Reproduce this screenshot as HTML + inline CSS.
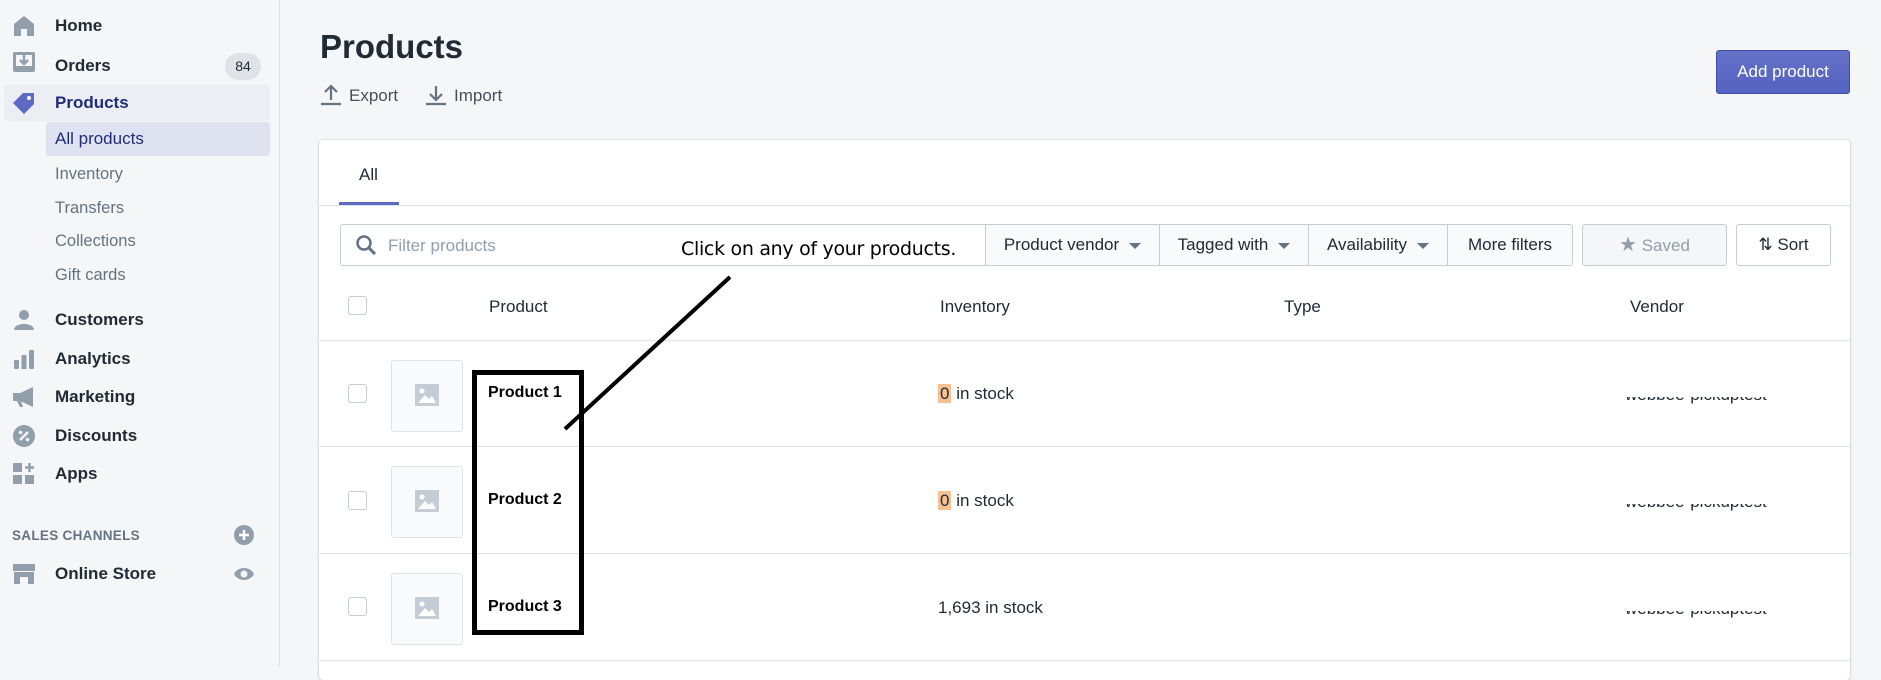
<!DOCTYPE html>
<html><head><meta charset="utf-8"><style>
*{box-sizing:border-box;margin:0;padding:0}
body{width:1881px;height:667px;overflow:hidden;background:#f4f6f8;font-family:"Liberation Sans",sans-serif;color:#212b36;position:relative;font-size:17px}
.abs{position:absolute}
.side{position:absolute;left:0;top:0;width:280px;height:667px;background:#f4f6f8;border-right:1px solid #dfe3e8}
.nav{position:absolute;left:55px;font-size:17px;color:#212b36;font-weight:bold;line-height:20px}
.sub{position:absolute;left:55px;font-size:16.5px;color:#637381;line-height:20px}
.ic{position:absolute;left:12px;width:24px;height:24px}
.card{position:absolute;left:319px;top:140px;width:1531px;height:540px;background:#fff;border-radius:4px;box-shadow:0 0 0 1px rgba(63,63,68,.07),0 1px 3px rgba(63,63,68,.15)}
.btn{position:absolute;top:224px;height:42px;border:1px solid #c4cdd5;background:#fff;font-size:17px;line-height:40px;color:#212b36;text-align:center}
.caret{display:inline-block;width:0;height:0;border-left:6px solid transparent;border-right:6px solid transparent;border-top:6px solid #637381;margin-left:10px;vertical-align:middle}
.hl{position:absolute;left:319px;width:1531px;height:1px;background:#dfe3e8}
.cb{position:absolute;left:348px;width:19px;height:19px;border:1px solid #c4cdd5;border-radius:3px;background:#fff}
.th{position:absolute;left:391px;width:72px;height:72px;border:1px solid #dfe3e8;border-radius:3px;background:#f9fafb}
.th svg{position:absolute;left:23px;top:23px}
.pn{position:absolute;left:488px;font-size:16px;font-weight:bold;color:#000}
.inv{position:absolute;left:938px;font-size:17px;color:#212b36}
.z{background:#f7c08f;padding:0 2px}
.ven{position:absolute;left:1625px;width:160px;height:7px;overflow:hidden;font-size:17px;color:#212b36}
.ven span{position:relative;top:-12px}
</style></head><body>
<div class="side">
  <svg class="ic" style="top:14px" viewBox="0 0 24 24"><path d="M2 10 L12 2 L22 10 V22 H15 V15 H9 V22 H2Z" fill="#919eab"/></svg>
  <div class="nav" style="top:16px">Home</div>
  <svg class="ic" style="top:50px" viewBox="0 0 24 24"><rect x="1" y="2" width="22" height="20" rx="2" fill="#919eab"/><rect x="4" y="5" width="16" height="11" fill="#f4f6f8"/><path d="M12 5v8M8 10l4 4 4-4" stroke="#919eab" stroke-width="2.5" fill="none"/></svg>
  <div class="nav" style="top:56px">Orders</div>
  <div class="abs" style="left:225px;top:53px;width:36px;height:27px;border-radius:14px;background:#dfe3e8;font-size:14px;line-height:27px;text-align:center;color:#212b36">84</div>
  <div class="abs" style="left:4px;top:85px;width:266px;height:36px;background:#ebeef2;border-radius:3px"></div>
  <svg class="ic" style="top:91px" viewBox="0 0 24 24"><path d="M11 2 H22 V13 L12 23 L1 12Z" fill="#5c6ac4"/><circle cx="17" cy="7" r="2" fill="#fff"/></svg>
  <div class="nav" style="top:93px;color:#202e78">Products</div>
  <div class="abs" style="left:46px;top:122px;width:224px;height:34px;background:#dfe3f1;border-radius:3px"></div>
  <div class="nav" style="top:129px;color:#202e78;font-weight:normal;font-size:17px">All products</div>
  <div class="sub" style="top:164px">Inventory</div>
  <div class="sub" style="top:198px">Transfers</div>
  <div class="sub" style="top:231px">Collections</div>
  <div class="sub" style="top:265px">Gift cards</div>
  <svg class="ic" style="top:308px" viewBox="0 0 24 24"><circle cx="12" cy="7" r="5" fill="#919eab"/><path d="M2 22 C2 14 22 14 22 22Z" fill="#919eab"/></svg>
  <div class="nav" style="top:310px">Customers</div>
  <svg class="ic" style="top:347px" viewBox="0 0 24 24"><rect x="2" y="13" width="5" height="9" rx="1" fill="#919eab"/><rect x="9.5" y="8" width="5" height="14" rx="1" fill="#919eab"/><rect x="17" y="3" width="5" height="19" rx="1" fill="#919eab"/></svg>
  <div class="nav" style="top:349px">Analytics</div>
  <svg class="ic" style="top:385px" viewBox="0 0 24 24"><path d="M1 8 H8 L21 2 V22 L8 16 H1Z M5 16 L8 22 H11 L9 16Z" fill="#919eab"/></svg>
  <div class="nav" style="top:387px">Marketing</div>
  <svg class="ic" style="top:424px" viewBox="0 0 24 24"><circle cx="12" cy="12" r="11" fill="#919eab"/><path d="M8 16 L16 8" stroke="#f4f6f8" stroke-width="2.5"/><circle cx="8.5" cy="8.5" r="1.8" fill="#f4f6f8"/><circle cx="15.5" cy="15.5" r="1.8" fill="#f4f6f8"/></svg>
  <div class="nav" style="top:426px">Discounts</div>
  <svg class="ic" style="top:462px" viewBox="0 0 24 24"><rect x="1" y="1" width="9" height="9" fill="#919eab"/><rect x="1" y="13" width="9" height="9" fill="#919eab"/><rect x="13" y="13" width="9" height="9" fill="#919eab"/><path d="M17.5 1v9M13 5.5h9" stroke="#919eab" stroke-width="2.5"/></svg>
  <div class="nav" style="top:464px">Apps</div>
  <div class="abs" style="left:12px;top:528px;font-size:13.5px;color:#637381;font-weight:bold;letter-spacing:.3px">SALES CHANNELS</div>
  <svg class="abs" style="left:234px;top:525px" width="20" height="20" viewBox="0 0 20 20"><circle cx="10" cy="10" r="10" fill="#919eab"/><path d="M10 5v10M5 10h10" stroke="#fff" stroke-width="2.5"/></svg>
  <svg class="ic" style="top:562px" viewBox="0 0 24 24"><path d="M1 2h22v7H1z M2 10h20v12h-6v-7H8v7H2z" fill="#919eab"/></svg>
  <div class="nav" style="top:564px">Online Store</div>
  <svg class="abs" style="left:233px;top:566px" width="22" height="16" viewBox="0 0 22 16"><path d="M1 8 C5 0 17 0 21 8 C17 16 5 16 1 8Z" fill="#919eab"/><circle cx="11" cy="8" r="3.5" fill="#f4f6f8"/></svg>
</div>
<div class="abs" style="left:320px;top:28px;font-size:33px;font-weight:bold;color:#212b36">Products</div>
<svg class="abs" style="left:320px;top:84px" width="22" height="22" viewBox="0 0 22 22"><path d="M11 16V3M5 8l6-6 6 6M1 20h20" stroke="#637381" stroke-width="2.2" fill="none"/></svg>
<div class="abs" style="left:349px;top:86px;font-size:17px;color:#454f5b">Export</div>
<svg class="abs" style="left:425px;top:84px" width="22" height="22" viewBox="0 0 22 22"><path d="M11 2v13M5 10l6 6 6-6M1 20h20" stroke="#637381" stroke-width="2.2" fill="none"/></svg>
<div class="abs" style="left:454px;top:86px;font-size:17px;color:#454f5b">Import</div>
<div class="abs" style="left:1716px;top:50px;width:134px;height:44px;background:linear-gradient(#6371c7,#5563c1);border:1px solid #3f4eae;border-radius:3px;color:#fff;font-size:17px;line-height:42px;text-align:center">Add product</div>

<div class="card"></div>
<div class="abs" style="left:359px;top:165px;font-size:17px;color:#212b36">All</div>
<div class="abs" style="left:339px;top:202px;width:60px;height:3px;background:#5c6ac4"></div>
<div class="hl" style="top:205px"></div>
<div class="abs" style="left:340px;top:224px;width:646px;height:42px;border:1px solid #c4cdd5;border-radius:3px 0 0 3px;background:#fff"></div>
<svg class="abs" style="left:355px;top:234px" width="22" height="22" viewBox="0 0 22 22"><circle cx="9" cy="9" r="6.5" stroke="#637381" stroke-width="2.5" fill="none"/><path d="M14 14l6 6" stroke="#637381" stroke-width="3"/></svg>
<div class="abs" style="left:388px;top:236px;font-size:17px;color:#919eab">Filter products</div>
<div class="btn" style="left:985px;width:175px;background:#f9fafb">Product vendor<span class="caret"></span></div>
<div class="btn" style="left:1159px;width:150px;background:#f9fafb">Tagged with<span class="caret"></span></div>
<div class="btn" style="left:1308px;width:140px;background:#f9fafb">Availability<span class="caret"></span></div>
<div class="btn" style="left:1447px;width:126px;border-radius:0 3px 3px 0;background:#f9fafb">More filters</div>
<div class="btn" style="left:1582px;width:145px;border-radius:3px;background:#f4f6f8;color:#919eab"><span style="color:#919eab;font-size:20px">★</span> Saved</div>
<div class="btn" style="left:1736px;width:95px;border-radius:3px">⇅ Sort</div>

<div class="cb" style="top:296px"></div>
<div class="abs" style="left:489px;top:297px;font-size:17px">Product</div>
<div class="abs" style="left:940px;top:297px;font-size:17px">Inventory</div>
<div class="abs" style="left:1284px;top:297px;font-size:17px">Type</div>
<div class="abs" style="left:1630px;top:297px;font-size:17px">Vendor</div>
<div class="hl" style="top:340px"></div>
<div class="hl" style="top:446px"></div>
<div class="hl" style="top:553px"></div>
<div class="hl" style="top:660px"></div>

<div class="cb" style="top:384px"></div>
<div class="th" style="top:360px"><svg width="24" height="22" viewBox="0 0 24 22"><rect width="24" height="22" fill="#c4cdd5"/><circle cx="7" cy="7" r="2.5" fill="#fff"/><path d="M3 19 L10 11 L14 15 L17 12 L21 19Z" fill="#fff"/></svg></div>
<div class="pn" style="top:384px">Product 1</div>
<div class="inv" style="top:384px"><span class="z">0</span> in stock</div>
<div class="ven" style="top:397px"><span>webbee-pickuptest</span></div>

<div class="cb" style="top:491px"></div>
<div class="th" style="top:466px"><svg width="24" height="22" viewBox="0 0 24 22"><rect width="24" height="22" fill="#c4cdd5"/><circle cx="7" cy="7" r="2.5" fill="#fff"/><path d="M3 19 L10 11 L14 15 L17 12 L21 19Z" fill="#fff"/></svg></div>
<div class="pn" style="top:491px">Product 2</div>
<div class="inv" style="top:491px"><span class="z">0</span> in stock</div>
<div class="ven" style="top:504px"><span>webbee-pickuptest</span></div>

<div class="cb" style="top:597px"></div>
<div class="th" style="top:573px"><svg width="24" height="22" viewBox="0 0 24 22"><rect width="24" height="22" fill="#c4cdd5"/><circle cx="7" cy="7" r="2.5" fill="#fff"/><path d="M3 19 L10 11 L14 15 L17 12 L21 19Z" fill="#fff"/></svg></div>
<div class="pn" style="top:598px">Product 3</div>
<div class="inv" style="top:598px">1,693 in stock</div>
<div class="ven" style="top:611px"><span>webbee-pickuptest</span></div>

<div class="abs" style="left:472px;top:370px;width:112px;height:265px;border:5px solid #000"></div>
<svg class="abs" style="left:0;top:0" width="1881" height="667"><path d="M730 277 L565 429" stroke="#000" stroke-width="4"/></svg>
<div class="abs" style="left:681px;top:238px;font-size:19px;color:#000;font-family:'DejaVu Sans','Liberation Sans',sans-serif;letter-spacing:-.3px">Click on any of your products.</div>
</body></html>
